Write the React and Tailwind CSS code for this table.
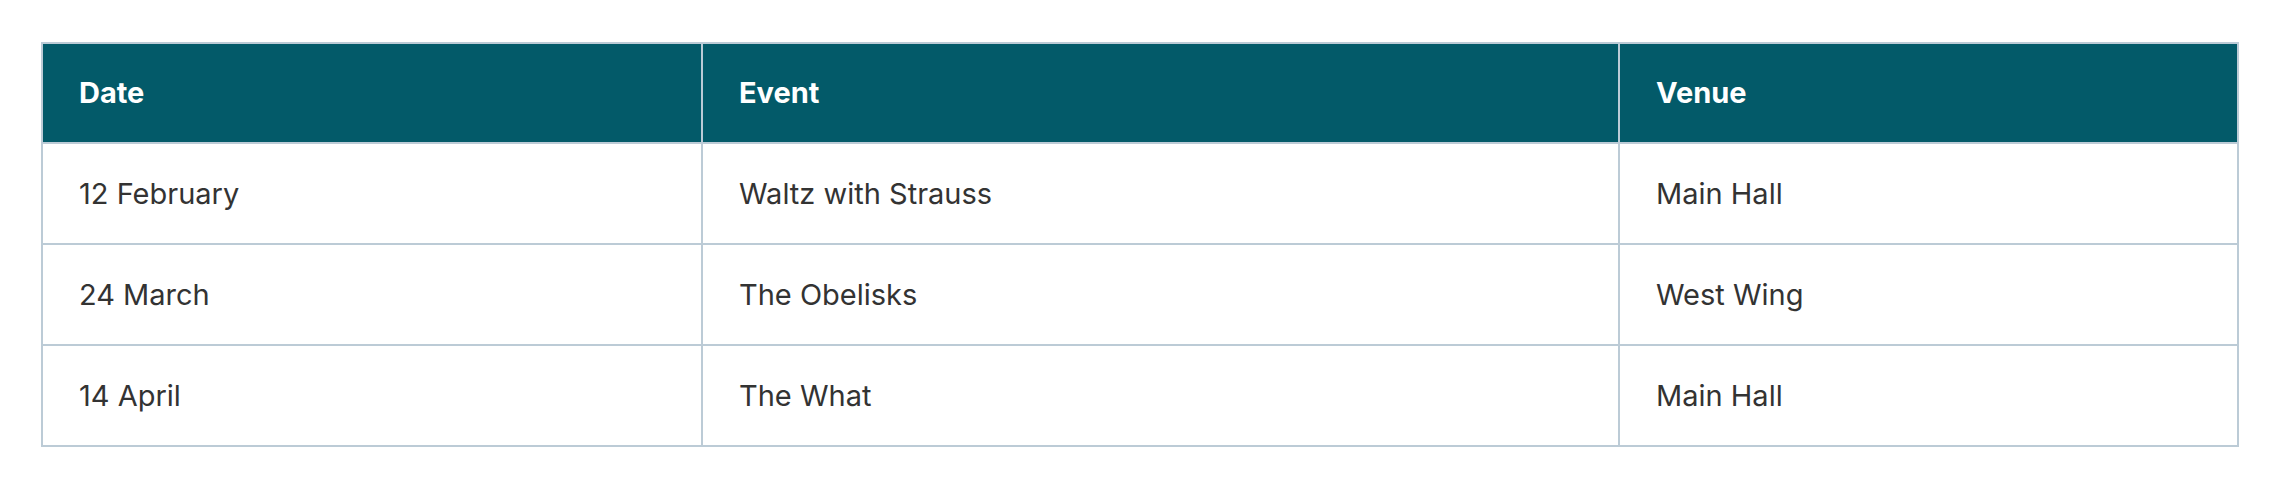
const ROWS = [
  { date: "12 February", event: "Waltz with Strauss", venue: "Main Hall" },
  { date: "24 March", event: "The Obelisks", venue: "West Wing" },
  { date: "14 April", event: "The What", venue: "Main Hall" },
];

export default function App() {
  return (
    <div className="min-h-[480px] bg-white pt-[42px] px-[41px]" style={{ fontFamily: "Inter, 'Noto Sans', sans-serif" }}>
      <table className="w-full border-collapse border-2 border-[#bccbd6] text-[29px] leading-[42px]">
        <thead>
          <tr className="bg-[#035a69] text-white">
            <th className="w-[660px] border-2 border-[#bccbd6] px-9 py-[28px] text-left font-bold">Date</th>
            <th className="w-[917px] border-2 border-[#bccbd6] px-9 py-[28px] text-left font-bold">Event</th>
            <th className="border-2 border-[#bccbd6] px-9 py-[28px] text-left font-bold">Venue</th>
          </tr>
        </thead>
        <tbody className="text-[#333333]">
          {ROWS.map((r) => (
            <tr key={r.date}>
              <td className="border-2 border-[#bccbd6] px-9 pt-[29px] pb-[28px]">{r.date}</td>
              <td className="border-2 border-[#bccbd6] px-9 pt-[29px] pb-[28px]">{r.event}</td>
              <td className="border-2 border-[#bccbd6] px-9 pt-[29px] pb-[28px]">{r.venue}</td>
            </tr>
          ))}
        </tbody>
      </table>
    </div>
  );
}
